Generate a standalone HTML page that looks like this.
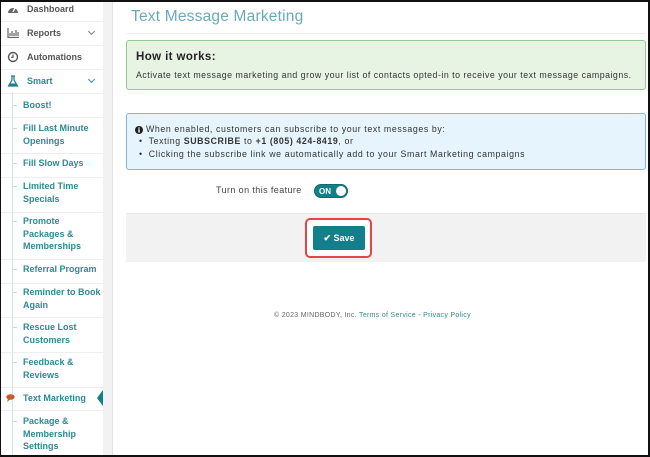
<!DOCTYPE html>
<html><head><meta charset="utf-8"><style>
*{margin:0;padding:0;box-sizing:border-box}
body{width:650px;height:457px;overflow:hidden;background:#fff;font-family:"Liberation Sans",sans-serif;position:relative}
.frame{position:absolute;left:0;top:0;width:650px;height:457px;border:2px solid #111;border-left-width:1px;pointer-events:none;z-index:10}
.side{position:absolute;left:0;top:0;width:103px;height:457px;background:#fff}
.gut{position:absolute;left:103px;top:0;width:10px;height:457px;background:#f2f2f2;border-right:1px solid #e2e2e2}
.it{position:absolute;left:0;width:103px;border-bottom:1px solid #eee;font-size:9px;line-height:12.5px;color:#2e8a93;font-weight:bold;letter-spacing:0}
.it span{position:absolute;left:23px;top:0;white-space:nowrap}
.top{color:#555;font-weight:bold}
.top span{left:27px}
.vl{position:absolute;left:12px;top:92px;width:1px;height:365px;background:#d9e6e8}
.dash{position:absolute;left:13px;width:4px;height:1px;background:#c8d8da}
.chev{position:absolute;left:89px;width:5px;height:5px;border-right:1.3px solid #777;border-bottom:1.3px solid #777;transform:rotate(45deg)}
h1{position:absolute;left:131px;top:8px;font-size:15.5px;font-weight:normal;color:#6aaab8;white-space:nowrap;letter-spacing:.2px}
.hr{position:absolute;left:126px;top:33px;width:520px;height:1px;background:#eee}
.green{position:absolute;left:126px;top:40px;width:520px;height:50px;background:#e7f4e4;border:1px solid #93cb8e;border-radius:3px}
.green b{position:absolute;left:9px;top:10px;font-size:11.5px;color:#222;letter-spacing:.4px}
.green p{position:absolute;left:9px;top:29px;font-size:8.8px;color:#333;white-space:nowrap;letter-spacing:.5px}
.blue{position:absolute;left:126px;top:113px;width:520px;height:57px;background:#e6f4fe;border:1px solid #7fb8e2;border-radius:3px;font-size:8.8px;color:#333;line-height:12.5px;letter-spacing:.6px}
.blue div{position:absolute;white-space:nowrap}
.lbl{position:absolute;left:216px;top:185px;font-size:9px;color:#444;letter-spacing:.4px}
.tog{position:absolute;left:314px;top:184px;width:34px;height:14px;border-radius:7px;background:#137f87;border:1px solid #0d6b72}
.tog i{position:absolute;left:4px;top:1.5px;font-size:8px;font-style:normal;font-weight:bold;color:#fff}
.tog em{position:absolute;right:1px;top:1px;width:10px;height:10px;border-radius:50%;background:#fff}
.gray{position:absolute;left:126px;top:213px;width:520px;height:49px;background:#f2f2f2;border-top:1px solid #e6e6e6}
.red{position:absolute;left:305px;top:218px;width:67px;height:40px;border:2.5px solid #e8434a;border-radius:5px;background:#fff}
.save{position:absolute;left:313px;top:226px;width:52px;height:24px;background:#137f8c;border-radius:2px;color:#fff;font-size:9px;font-weight:bold;line-height:24px;text-align:center}
.foot{position:absolute;left:274px;top:312px;font-size:7px;color:#666;white-space:nowrap;letter-spacing:.3px}
.foot a{color:#2e8a93;text-decoration:none}
</style></head><body>
<div class="side">
<div class="it top" style="top:1px;height:21px"><span style="top:2px">Dashboard</span><svg style="position:absolute;left:7px;top:3px" width="12" height="10" viewBox="0 0 12 10"><path d="M1 9A5 5 0 1 1 11 9Z" fill="#666"/><path d="M6 8L8 4" stroke="#fff" stroke-width="1.3"/></svg></div>
<div class="it top" style="top:22px;height:24px"><span style="top:5px">Reports</span><svg style="position:absolute;left:7px;top:6px" width="12" height="10" viewBox="0 0 12 10"><path d="M1 0V9.5H12M3 8V5M5 8V3M7 8V5M9 8V2M11 8V4" stroke="#666" stroke-width="1.2" fill="none"/></svg><div class="chev" style="top:7px"></div></div>
<div class="it top" style="top:46px;height:24px"><span style="top:5px">Automations</span><svg style="position:absolute;left:7px;top:5px" width="12" height="12" viewBox="0 0 12 12"><circle cx="6" cy="6" r="4.5" stroke="#555" stroke-width="1.4" fill="none"/><path d="M6 3.5V6.3H4" stroke="#555" stroke-width="1.2" fill="none"/></svg></div>
<div class="it top" style="top:70px;height:24px;color:#2e8a93"><span style="top:5px">Smart</span><svg style="position:absolute;left:7px;top:5px" width="12" height="12" viewBox="0 0 12 12"><path d="M4 1H8M5 1V5L1.5 11H10.5L7 5V1" stroke="#1d7f88" stroke-width="1.2" fill="none"/><path d="M3 8.5H9L10.5 11H1.5Z" fill="#1d7f88"/></svg><div class="chev" style="top:7px;border-color:#2e8a93"></div></div>
<div class="vl"></div>
<div class="it" style="top:94px;height:24px"><span style="top:5px">Boost!</span></div>
<div class="it" style="top:118px;height:36px"><span style="top:4px">Fill Last Minute<br>Openings</span></div>
<div class="it" style="top:154px;height:24px"><span style="top:3px">Fill Slow Days</span></div>
<div class="it" style="top:178px;height:35px"><span style="top:2px">Limited Time<br>Specials</span></div>
<div class="it" style="top:213px;height:47px"><span style="top:2px">Promote<br>Packages &amp;<br>Memberships</span></div>
<div class="it" style="top:260px;height:24px"><span style="top:3px">Referral Program</span></div>
<div class="it" style="top:284px;height:34px"><span style="top:2px">Reminder to Book<br>Again</span></div>
<div class="it" style="top:318px;height:35px"><span style="top:3px">Rescue Lost<br>Customers</span></div>
<div class="it" style="top:353px;height:35px"><span style="top:3px">Feedback &amp;<br>Reviews</span></div>
<div class="it" style="top:388px;height:23px"><span style="top:4px">Text Marketing</span><svg style="position:absolute;left:6px;top:6px" width="9" height="8" viewBox="0 0 9 8"><ellipse cx="4.5" cy="3" rx="4.2" ry="2.8" fill="#c9582a"/><path d="M2 5L1 8L4 5.5Z" fill="#c9582a"/></svg><svg style="position:absolute;left:97px;top:2px" width="6" height="16" viewBox="0 0 6 16"><path d="M6 0L0 8L6 16Z" fill="#137f87"/></svg></div>
<div class="it" style="top:411px;height:46px;border:none"><span style="top:4px">Package &amp;<br>Membership<br>Settings</span></div>
<div class="dash" style="top:105px"></div><div class="dash" style="top:128px"></div><div class="dash" style="top:163px"></div><div class="dash" style="top:186px"></div><div class="dash" style="top:221px"></div><div class="dash" style="top:269px"></div><div class="dash" style="top:292px"></div><div class="dash" style="top:327px"></div><div class="dash" style="top:362px"></div><div class="dash" style="top:421px"></div>
</div>
<div class="gut"></div>
<h1>Text Message Marketing</h1>
<div class="hr"></div>
<div class="green"><b>How it works:</b><p>Activate text message marketing and grow your list of contacts opted-in to receive your text message campaigns.</p></div>
<div class="blue">
<svg style="position:absolute;left:8px;top:12px" width="8" height="8" viewBox="0 0 8 8"><circle cx="4" cy="4" r="4" fill="#222"/><rect x="3.3" y="3.3" width="1.4" height="3.2" fill="#fff"/><rect x="3.3" y="1.5" width="1.4" height="1.2" fill="#fff"/></svg>
<div style="left:19px;top:9px">When enabled, customers can subscribe to your text messages by:</div>
<div style="left:12px;top:21px">&bull;&nbsp; Texting <b>SUBSCRIBE</b> to <b>+1 (805) 424-8419</b>, or</div>
<div style="left:12px;top:34px">&bull;&nbsp; Clicking the subscribe link we automatically add to your Smart Marketing campaigns</div>
</div>
<div class="lbl">Turn on this feature</div>
<div class="tog"><i>ON</i><em></em></div>
<div class="gray"></div>
<div class="red"></div>
<div class="save">&#10004; Save</div>
<div class="foot">© 2023 MINDBODY, Inc. <a>Terms of Service</a> - <a>Privacy Policy</a></div>
<div class="frame"></div>
</body></html>
